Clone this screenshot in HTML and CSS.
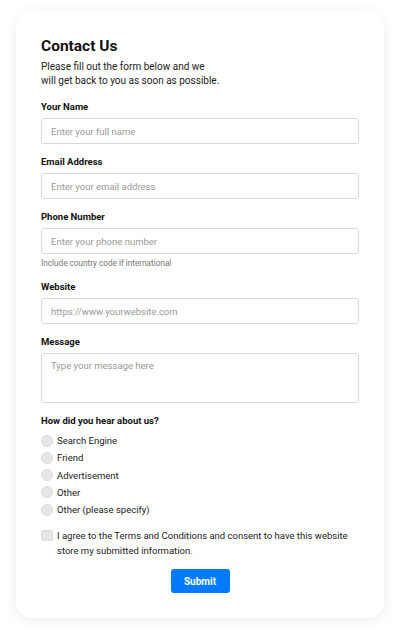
FILE: index.html
```html
<!DOCTYPE html>
<html lang="en">
<head>
    <meta charset="UTF-8">
    <meta name="viewport" content="width=device-width, initial-scale=1.0">
    <title>Contact Us</title>
    <link rel="stylesheet" href="styles.css">
</head>
<body>
    <div class="cartao">
        <h1 class="titulo">Contact Us</h1>
        <p class="descricao">Please fill out the form below and we<br>will get back to you as soon as possible.</p>
        <form class="formulario" onsubmit="return false">
            <div class="campo">
                <label for="nome">Your Name</label>
                <input type="text" id="nome" placeholder="Enter your full name">
            </div>
            <div class="campo">
                <label for="email">Email Address</label>
                <input type="email" id="email" placeholder="Enter your email address">
            </div>
            <div class="campo">
                <label for="fone">Phone Number</label>
                <input type="tel" id="fone" placeholder="Enter your phone number">
                <small class="ajuda">Include country code if international</small>
            </div>
            <div class="campo">
                <label for="site">Website</label>
                <input type="url" id="site" placeholder="https://www.yourwebsite.com">
            </div>
            <div class="campo">
                <label for="msg">Message</label>
                <textarea id="msg" placeholder="Type your message here"></textarea>
            </div>
            <div class="campo">
                <span class="rotulo">How did you hear about us?</span>
                <div class="opcoes">
                    <label class="opcao"><input type="radio" name="origem"> Search Engine</label>
                    <label class="opcao"><input type="radio" name="origem"> Friend</label>
                    <label class="opcao"><input type="radio" name="origem"> Advertisement</label>
                    <label class="opcao"><input type="radio" name="origem"> Other</label>
                    <label class="opcao"><input type="radio" name="origem"> Other (please specify)</label>
                </div>
            </div>
            <label class="termos">
                <input type="checkbox">
                <span>I agree to the Terms and Conditions and consent to have this website store my submitted information.</span>
            </label>
            <button type="submit" class="botao">Submit</button>
        </form>
    </div>
</body>
</html>
```

FILE: styles.css
```css
* {
    margin: 0;
    padding: 0;
    box-sizing: border-box;
}
body {
    background-color: #fff;
    font-family: Roboto, "Noto Sans", sans-serif;
    color: #222;
    padding: 11px 16px;
}
.cartao {
    background-color: #fff;
    border-radius: 16px;
    padding: 25px;
    box-shadow: 0 2px 14px rgba(0, 0, 0, 0.08);
}
.titulo {
    font-size: 15.5px;
    line-height: 20px;
    font-weight: 700;
    color: #111;
}
.descricao {
    font-size: 10px;
    line-height: 14px;
    margin-top: 4px;
    color: #222;
}
.formulario {
    display: flex;
    flex-direction: column;
    margin-top: 12px;
}
.campo {
    display: flex;
    flex-direction: column;
    margin-bottom: 11px;
}
.campo label,
.rotulo {
    font-size: 9.5px;
    line-height: 13px;
    font-weight: 700;
    color: #111;
    margin-bottom: 5px;
}
.campo input,
.campo textarea {
    font-family: inherit;
    font-size: 9.5px;
    height: 26px;
    padding: 0 9px;
    border: 1px solid #d9d9d9;
    border-radius: 3px;
    color: #222;
    outline: none;
}
.campo textarea {
    height: 50px;
    padding: 6px 9px;
    resize: none;
}
::placeholder {
    color: #999;
}
.ajuda {
    font-size: 8.2px;
    line-height: 11px;
    color: #777;
    margin-top: 4px;
}
/* opcoes de radio */
.opcoes {
    display: flex;
    flex-direction: column;
}
.campo .opcao {
    display: flex;
    align-items: center;
    gap: 4px;
    font-size: 9.5px;
    line-height: 17px;
    font-weight: 400;
    color: #222;
    margin: 0;
    height: 17.25px;
}
.opcao input,
.termos input {
    appearance: none;
    -webkit-appearance: none;
    width: 12px;
    height: 12px;
    padding: 0;
    border: 1px solid #dcdcdc;
    background-color: #e6e6e6;
    border-radius: 50%;
    flex-shrink: 0;
    margin: 0;
}
.termos {
    display: flex;
    align-items: flex-start;
    gap: 4px;
    font-size: 9.5px;
    line-height: 14.5px;
}
.termos input {
    border-radius: 2px;
    margin-top: 1px;
    height: 11px;
}
.botao {
    align-self: center;
    margin-top: 11px;
    width: 59px;
    height: 24px;
    background-color: #007bff;
    color: white;
    border: none;
    border-radius: 3px;
    font-family: inherit;
    font-size: 10px;
    font-weight: 700;
    cursor: pointer;
}
```
